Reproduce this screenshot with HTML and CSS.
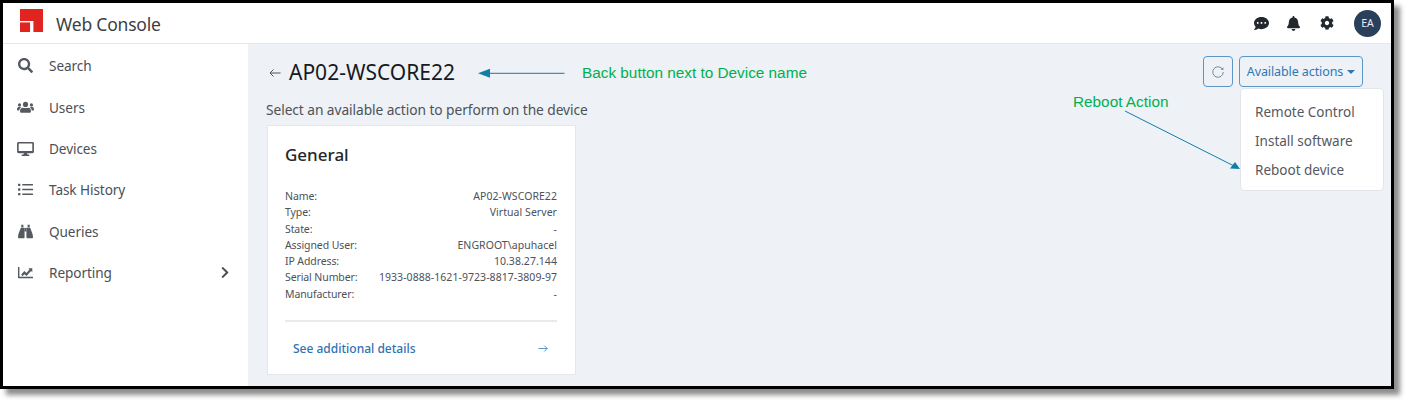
FILE: index.html
```html
<!DOCTYPE html>
<html lang="en">
<head>
<meta charset="utf-8">
<title>Web Console</title>
<link rel="stylesheet" href="styles.css">
</head>
<body>
<div class="frame">
  <header class="topbar">
    <svg class="logo" viewBox="0 0 24 24"><path d="M0 0H24V24H14V12.500H0Z"/><path d="M0 14H10.500V24H0Z"/></svg>
    <span class="brand">Web Console</span>
    <div class="top-icons">
      <svg class="ti ti-chat" viewBox="0 0 512 512"><path d="M256 32C114.600 32 0 125.100 0 240c0 49.600 21.400 95 57 130.700C44.500 421.100 2.700 466 2.200 466.500c-2.200 2.300-2.800 5.700-1.500 8.700S4.800 480 8 480c66.300 0 116-31.800 140.600-51.400 32.700 12.300 69 19.400 107.400 19.400 141.400 0 256-93.100 256-208S397.400 32 256 32zM128 272c-17.700 0-32-14.300-32-32s14.300-32 32-32 32 14.300 32 32-14.300 32-32 32zm128 0c-17.700 0-32-14.300-32-32s14.300-32 32-32 32 14.300 32 32-14.300 32-32 32zm128 0c-17.700 0-32-14.300-32-32s14.300-32 32-32 32 14.300 32 32-14.300 32-32 32z"/></svg>
      <svg class="ti ti-bell" viewBox="0 0 448 512"><path d="M224 512c35.320 0 63.970-28.650 63.970-64H160.030c0 35.350 28.650 64 63.970 64zm215.390-149.710c-19.320-20.760-55.470-51.990-55.470-154.290 0-77.700-54.480-139.900-127.940-155.160V32c0-17.670-14.320-32-31.980-32s-31.980 14.330-31.980 32v20.840C118.560 68.100 64.080 130.300 64.080 208c0 102.300-36.150 133.530-55.470 154.290-6 6.450-8.660 14.160-8.610 21.710.110 16.400 12.980 32 32.100 32h383.800c19.120 0 32-15.600 32.100-32 .050-7.550-2.610-15.270-8.610-21.710z"/></svg>
      <svg class="ti ti-cog" viewBox="0 0 512 512"><path d="M487.400 315.700l-42.600-24.600c4.300-23.200 4.300-47 0-70.200l42.600-24.600c4.900-2.800 7.100-8.600 5.500-14-11.100-35.600-30-67.800-54.700-94.600-3.800-4.100-10-5.100-14.800-2.300L380.800 110c-17.900-15.400-38.500-27.300-60.800-35.100V25.800c0-5.600-3.900-10.500-9.400-11.700-36.700-8.200-74.300-7.800-109.200 0-5.500 1.200-9.400 6.100-9.400 11.700V75c-22.200 7.900-42.800 19.800-60.800 35.100L88.700 85.500c-4.900-2.800-11-1.900-14.800 2.300-24.700 26.700-43.600 58.900-54.700 94.600-1.700 5.400.6 11.200 5.500 14L67.300 221c-4.300 23.200-4.300 47 0 70.200l-42.600 24.600c-4.900 2.800-7.100 8.600-5.500 14 11.100 35.600 30 67.800 54.700 94.600 3.800 4.100 10 5.100 14.800 2.300l42.600-24.600c17.900 15.400 38.500 27.300 60.800 35.100v49.200c0 5.600 3.900 10.500 9.400 11.700 36.700 8.200 74.300 7.800 109.200 0 5.500-1.200 9.400-6.100 9.400-11.700v-49.200c22.200-7.900 42.800-19.800 60.800-35.100l42.600 24.600c4.900 2.800 11 1.900 14.800-2.300 24.700-26.700 43.600-58.900 54.700-94.600 1.500-5.500-.7-11.300-5.600-14.100zM256 336c-44.100 0-80-35.900-80-80s35.900-80 80-80 80 35.900 80 80-35.900 80-80 80z"/></svg>
      <span class="avatar">EA</span>
    </div>
  </header>
  <div class="body">
    <nav class="sidebar">
      <a class="nav-item">
        <svg class="nav-icon" viewBox="0 0 512 512"><path d="M505 442.700L405.300 343c-4.500-4.500-10.600-7-17-7H372c27.600-35.300 44-79.700 44-128C416 93.100 322.900 0 208 0S0 93.100 0 208s93.100 208 208 208c48.300 0 92.700-16.400 128-44v16.300c0 6.400 2.500 12.500 7 17l99.700 99.700c9.400 9.400 24.600 9.400 33.900 0l28.300-28.300c9.400-9.400 9.400-24.600.1-34zM208 336c-70.700 0-128-57.200-128-128 0-70.700 57.200-128 128-128 70.700 0 128 57.200 128 128 0 70.700-57.200 128-128 128z"/></svg>
        <span>Search</span>
      </a>
      <a class="nav-item">
        <svg class="nav-icon nav-icon-wide" viewBox="0 0 640 512"><circle cx="96" cy="160" r="60"/><circle cx="544" cy="160" r="60"/><circle cx="320" cy="140" r="96"/><path d="M0 330c0-60 40-98 92-98 26 0 46 8 62 24-40 24-66 66-70 112H30c-18 0-30-14-30-38zM640 330c0-60-40-98-92-98-26 0-46 8-62 24 40 24 66 66 70 112h54c18 0 30-14 30-38zM196 264c20-6 50 14 124 14s104-20 124-14c48 10 80 58 80 114v30c0 28-20 48-48 48H164c-28 0-48-20-48-48v-30c0-56 32-104 80-114z"/></svg>
        <span>Users</span>
      </a>
      <a class="nav-item">
        <svg class="nav-icon nav-icon-wide" viewBox="0 0 576 512"><path fill-rule="evenodd" d="M48 32h480c26 0 48 22 48 48v288c0 26-22 48-48 48H340l16 48h44c13 0 24 11 24 24s-11 24-24 24H176c-13 0-24-11-24-24s11-24 24-24h44l16-48H48c-26 0-48-22-48-48V80c0-26 22-48 48-48zM56 88v256h464V88z"/></svg>
        <span>Devices</span>
      </a>
      <a class="nav-item">
        <svg class="nav-icon" viewBox="0 0 512 512"><rect x="0" y="56" width="80" height="80" rx="14"/><rect x="0" y="216" width="80" height="80" rx="14"/><rect x="0" y="376" width="80" height="80" rx="14"/><rect x="144" y="72" width="368" height="48" rx="10"/><rect x="144" y="232" width="368" height="48" rx="10"/><rect x="144" y="392" width="368" height="48" rx="10"/></svg>
        <span>Task History</span>
      </a>
      <a class="nav-item">
        <svg class="nav-icon" viewBox="0 0 512 512"><path d="M112 24h72v88h-72zM328 24h72v88h-72zM96 128h128v320c0 22-16 40-40 40H40c-24 0-40-18-40-40 4-130 56-190 96-320zM416 128H288v320c0 22 16 40 40 40h144c24 0 40-18 40-40-4-130-56-190-96-320zM232 136h48v120h-48z"/></svg>
        <span>Queries</span>
      </a>
      <a class="nav-item">
        <svg class="nav-icon" viewBox="0 0 512 512"><path d="M0 64h48v336h464v48H24c-13 0-24-11-24-24z"/><path d="M112 320l104-112 72 64 104-120-40-40h136v136l-44-44-152 172-72-64-72 76z"/></svg>
        <span>Reporting</span>
        <svg class="nav-chevron" viewBox="0 0 320 512"><path d="M285.500 273L91.100 467.300c-9.400 9.400-24.600 9.400-33.900 0l-22.700-22.700c-9.400-9.400-9.400-24.500 0-33.900L188.500 256 34.500 101.300c-9.300-9.400-9.300-24.500 0-33.900l22.700-22.700c9.400-9.400 24.600-9.400 33.900 0L285.500 239c9.400 9.400 9.400 24.600 0 34z"/></svg>
      </a>
    </nav>
    <main class="content">
      <div class="page-head">
        <svg class="back" viewBox="0 0 12 10"><path d="M11.500 5H1M4.500 1.500L1 5l3.500 3.500"/></svg>
        <h1 class="title">AP02-WSCORE22</h1>
        <div class="actions">
          <button class="btn btn-icon">
            <svg class="refresh" viewBox="0 0 16 16"><path d="M13.300 5.200A6 6 0 1 0 14 8"/><path class="refresh-tip" d="M10.200 5.600h4V1.800z"/></svg>
          </button>
          <div class="menu-wrap">
            <button class="btn btn-menu">Available actions<i class="caret"></i></button>
            <ul class="menu">
              <li>Remote Control</li>
              <li>Install software</li>
              <li>Reboot device</li>
            </ul>
          </div>
        </div>
      </div>
      <p class="lead">Select an available action to perform on the device</p>
      <section class="card">
        <h2 class="card-title">General</h2>
        <dl class="facts">
          <div><dt>Name:</dt><dd>AP02-WSCORE22</dd></div>
          <div><dt>Type:</dt><dd>Virtual Server</dd></div>
          <div><dt>State:</dt><dd>-</dd></div>
          <div><dt>Assigned User:</dt><dd>ENGROOT\apuhacel</dd></div>
          <div><dt>IP Address:</dt><dd>10.38.27.144</dd></div>
          <div><dt>Serial Number:</dt><dd>1933-0888-1621-9723-8817-3809-97</dd></div>
          <div><dt>Manufacturer:</dt><dd>-</dd></div>
        </dl>
        <a class="card-link">
          <span>See additional details</span>
          <svg class="link-arrow" viewBox="0 0 12 10"><path d="M.5 5H11M7.500 1.500L11 5 7.500 8.500"/></svg>
        </a>
      </section>
    </main>
  </div>
  <span class="note note-back">Back button next to Device name</span>
  <span class="note note-reboot">Reboot Action</span>
  <svg class="callouts" viewBox="0 0 1394 389">
    <path class="callout-line" d="M486 70.300H561.500"/>
    <path class="callout-head" d="M475 70.300L487 65.800V74.800Z"/>
    <path class="callout-line" d="M1122 108L1231 163"/>
    <path class="callout-head" d="M1237 166L1227 165.500L1232 159Z"/>
  </svg>
</div>
</body>
</html>
```
FILE: styles.css
```css
* { box-sizing: border-box; }
html, body { margin: 0; padding: 0; background: #fff; }
body { width: 1408px; height: 404px; overflow: hidden; font-family: "Noto Sans", "Open Sans", sans-serif; color: #4a4a4a; }

.frame {
  position: relative;
  width: 1394px;
  height: 389px;
  border: 3px solid #000;
  display: flex;
  flex-direction: column;
  background: #eef1f5;
  box-shadow: 6px 6px 5px rgba(0, 0, 0, .45);
}

.topbar {
  flex: none;
  height: 41px;
  background: #fff;
  border-bottom: 1px solid #e6e8eb;
  display: flex;
  align-items: center;
  padding: 0 10px 0 17px;
}
.logo { width: 23px; height: 23px; fill: #e02520; margin-top: -5px; }
.brand { margin: 2px 0 0 13px; font-size: 17.500px; color: #3b3f45; letter-spacing: -.2px; }
.top-icons { margin-left: auto; display: flex; align-items: center; }
.ti { fill: #23282e; display: block; height: 15px; }
.ti-chat { width: 15px; }
.ti-bell { width: 13px; margin-left: 18px; }
.ti-cog { width: 14px; height: 14px; margin-left: 20px; }
.avatar {
  width: 27px; height: 27px; margin-left: 20px; border-radius: 50%;
  background: #2a3f5a; color: #e8edf3; font-size: 10.500px;
  display: flex; align-items: center; justify-content: center;
}

.body { flex: 1; display: flex; min-height: 0; }
.sidebar { flex: none; width: 245px; background: #fff; padding-top: 1px; }
.nav-item { display: flex; align-items: center; height: 41.400px; padding: 0 16px 0 15px; font-size: 13.600px; color: #4b5058; letter-spacing: -.08px; }
.nav-icon { width: 15px; height: 15px; fill: #555a60; flex: none; margin-right: 16px; }
.nav-icon-wide { width: 17px; margin-left: -1px; margin-right: 15px; }
.nav-chevron { width: 10px; height: 13px; fill: #4b5058; margin-left: auto; margin-right: 2px; }

.content { flex: 1; padding: 0 7px 0 18px; min-width: 0; }
.page-head { display: flex; align-items: center; height: 31px; margin-top: 12px; padding-left: 3px; }
.back { width: 12px; height: 10px; fill: none; stroke: #555; stroke-width: 1; margin-top: 2px; }
.title { margin: 0 0 0 8px; font-size: 21px; font-weight: 400; color: #16191d; }
.actions { margin-left: auto; margin-right: 21px; display: flex; gap: 6px; }
.btn {
  height: 31px; border: 1px solid #5b96c5; border-radius: 4px; background: transparent;
  color: #2f78b7; font-family: inherit; font-size: 12.500px; padding: 0; letter-spacing: -.1px;
}
.btn-icon { width: 30px; display: flex; align-items: center; justify-content: center; }
.refresh { width: 14px; height: 14px; fill: none; stroke: #6f8795; stroke-width: 1.100; }
.refresh-tip { fill: #6f8795; stroke: none; transform: scale(.8); transform-origin: 14px 5px; }
.btn-menu { width: 124px; display: flex; align-items: center; justify-content: center; }
.caret { display: block; margin-left: 4px; border: 4px solid transparent; border-top-color: #2f78b7; border-bottom: 0; }
.menu-wrap { position: relative; }
.menu {
  position: absolute; top: 32px; left: 1px; z-index: 2; width: 144px; height: 103px; margin: 0; padding: 9px 0;
  list-style: none; background: #fff; border: 1px solid #e2e5e9; border-radius: 4px;
  font-size: 13.500px; color: #55595f;
}
.menu li { height: 29px; line-height: 28px; padding-left: 14px; }

.lead { margin: 13px 0 0 0; height: 26px; line-height: 20px; font-size: 13.750px; color: #4d5158; letter-spacing: -.07px; }
.card {
  width: 309px; height: 250px; margin: -1px 0 0 1px; background: #fff; border: 1px solid #e4e6e9;
  padding: 16px 18px 0 17px;
}
.card-title { margin: 0; font-size: 17px; line-height: 25px; font-weight: 500; color: #22262b; }
.facts { margin: 21px 0 0 0; font-size: 10.500px; line-height: 16.300px; color: #4d5158; padding-bottom: 18px; border-bottom: 2px solid #e8eaed; letter-spacing: .05px; }
.facts div { display: flex; justify-content: space-between; }
.facts dt, .facts dd { margin: 0; }
.facts dt { letter-spacing: -.1px; }
.card-link { display: flex; align-items: center; justify-content: space-between; height: 53px; padding: 0 9px 0 8px; color: #2f72b3; font-size: 12px; font-weight: 500; }
.link-arrow { width: 10px; height: 9px; fill: none; stroke: #3f82bf; stroke-width: 1; }

.note { position: absolute; font-family: "Liberation Sans", Arial, sans-serif; color: #00b050; font-size: 15.330px; line-height: 18px; }
.note-back { left: 579px; top: 61px; }
.note-reboot { left: 1070px; top: 90px; }
.callouts { position: absolute; left: 0; top: 0; width: 1394px; height: 389px; z-index: 3; pointer-events: none; }
.callout-line { fill: none; stroke: #0f7fa8; stroke-width: 1; }
.callout-head { fill: #0f7fa8; }
```
